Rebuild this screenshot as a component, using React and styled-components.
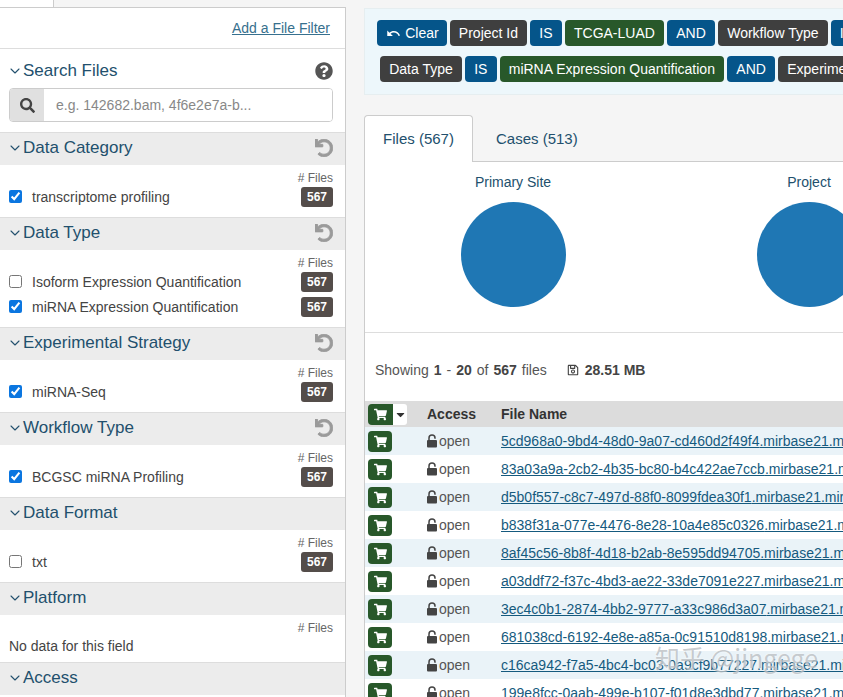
import React from 'react';
import styled, { createGlobalStyle } from 'styled-components';
import { FaSearch, FaQuestionCircle, FaUndo, FaShoppingCart, FaRegSave, FaCaretDown } from 'react-icons/fa';
import { MdUndo } from 'react-icons/md';
import { ChevronDown } from 'lucide-react';

const Global = createGlobalStyle`
  html, body { margin: 0; padding: 0; height: 100%; overflow: hidden; background: #f5f5f5; }
  * { box-sizing: border-box; }
  body { font-family: "Liberation Sans", Arial, sans-serif; font-size: 14px; color: #444; }
`;

const Page = styled.div`
  position: relative; width: 843px; height: 697px; overflow: hidden; display: flex; background: #f5f5f5;
`;
const Side = styled.aside`
  width: 346px; flex: none; display: flex; flex-direction: column;
`;
const TopTab = styled.div`
  width: 54px; height: 8px; flex: none; background: #fff; border-right: 1px solid #ccc;
`;
const SidePanel = styled.div`
  flex: 1; background: #fff; border-top: 1px solid #ccc; border-right: 1px solid #ccc; margin-top: -1px; overflow: hidden;
`;
const FilterBar = styled.div`
  height: 41px; padding: 12px 15px 0 0; text-align: right; border-bottom: 1px solid #ddd;
`;
const TealLink = styled.a`
  color: #37708e; text-decoration: underline; font-size: 14px;
`;
const SearchBlock = styled.section`
  height: 83px; padding: 6px 12px 0 9px;
`;
const Head = styled.div`
  display: flex; align-items: center; height: 32px; color: #22506d; font-size: 17px;
  > span { flex: 1; }
  > svg:first-child { margin-left: -2px; flex: none; }
`;
const FacetHead = styled(Head)`
  background: #ececec; border-top: 1px solid #ddd; padding: 0 12px 3px 9px; height: 33px;
`;
const Search = styled.div`
  display: flex; height: 34px; margin-top: 1px; border: 1px solid #ccc; border-radius: 4px; overflow: hidden;
`;
const SearchAddon = styled.div`
  width: 34px; background: #e0e0e0; display: flex; align-items: center; justify-content: center; color: #444; font-size: 15px;
`;
const SearchInput = styled.div`
  flex: 1; padding: 8px 12px; color: #888; font-size: 14px; background: #fff; white-space: nowrap;
`;
const FacetBody = styled.div`
  padding: 6px 12px 8px 9px; display: flex; flex-direction: column;
`;
const FilesLabel = styled.div`
  text-align: right; font-size: 12px; color: #666; height: 13px; line-height: 14px;
`;
const Row = styled.label`
  display: flex; align-items: center; height: 25px; font-size: 14px; color: #444;
  input { margin: 0 10px 0 0; width: 13px; height: 13px; accent-color: #0b76e0; }
  > span { flex: 1; }
`;
const Count = styled.span`
  flex: none !important; background: #544d4a; color: #fff; font-weight: bold; font-size: 12px; width: 32px; height: 20px;
  line-height: 20px; text-align: center; border-radius: 3px;
`;
const NoData = styled.div`
  font-size: 14px; line-height: 16px; color: #444; margin-top: 4px;
`;

const Main = styled.main`
  flex: 1; min-width: 0; padding: 8px 0 0 18px; display: flex; flex-direction: column; overflow: hidden;
`;
const Query = styled.div`
  height: 87px; width: 600px; background: #edf7fb; border: 1px solid #e6eef0; padding: 11px 0 0 12px; overflow: hidden; flex: none;
`;
const PillRow = styled.div`
  display: flex; gap: 3px; height: 26px; margin-bottom: 10px; white-space: nowrap; margin-left: ${p => p.$indent ? 3 : 0}px;
`;
const Pill = styled.span`
  display: inline-flex; align-items: center; gap: 4px; flex: none; height: 26px; padding: 0 9.2px; border-radius: 4px; color: #fff; font-size: 14px;
  background: ${p => ({ blue: '#05558a', dark: '#3f3f3f', green: '#28582a' }[p.$c])};
`;
const ClearPill = styled(Pill)`
  padding-right: 8px;
`;
const Tabs = styled.div`
  display: flex; margin-top: 20px; height: 47px; flex: none; position: relative; z-index: 1;
`;
const ActiveTab = styled.div`
  width: 109px; height: 47px; background: #fff; border: 1px solid #ccc; border-bottom: 0; border-radius: 4px 4px 0 0;
  padding-top: 14px; text-align: center; color: #22506d; font-size: 15px;
`;
const Tab = styled.div`
  padding: 15px 0 0 23px; color: #22506d; font-size: 15px;
`;
const Panel = styled.div`
  flex: 1; width: 600px; background: #fff; border: 1px solid #ccc; margin-top: -1px;
`;
const Charts = styled.div`
  height: 171px; border-bottom: 1px solid #ddd; display: flex; padding-top: 12px;
`;
const Chart = styled.div`
  width: 296px; flex: none; display: flex; flex-direction: column; align-items: center; color: #22506d; font-size: 14px;
`;
const Pie = styled.div`
  width: 105px; height: 105px; border-radius: 50%; background: #1f77b4; margin-top: 12px;
`;
const Summary = styled.div`
  height: 68px; padding: 29px 0 0 10px; color: #555; font-size: 14px; display: flex; align-items: flex-start; gap: 5px;
  b { color: #444; }
`;
const Size = styled.span`
  display: inline-flex; align-items: center; gap: 6px; margin-left: 15px; font-weight: bold; color: #444;
  svg { font-size: 12px; }
`;
const TableHead = styled.div`
  display: flex; align-items: center; height: 26px; background: #dcdcdc; font-weight: bold; color: #333; font-size: 14px;
`;
const CartCol = styled.div`
  width: 62px; flex: none; padding-left: 3px; display: flex; align-items: center;
`;
const AccessCol = styled.div`
  width: 74px; flex: none; display: flex; align-items: center; gap: 2px;
`;
const CartBtn = styled.span`
  display: inline-flex; align-items: center; justify-content: center; width: 24px; height: 21px; background: #28582a; color: #fff; border-radius: 4px; font-size: 13px;
`;
const HeadCart = styled(CartBtn)`
  border-radius: 4px 0 0 4px; width: 25px;
`;
const CartDrop = styled.span`
  display: inline-flex; align-items: center; justify-content: center; width: 14px; height: 21px; background: #fff; color: #333; font-size: 13px; border-radius: 0 3px 3px 0;
`;
const TableRow = styled.div`
  display: flex; align-items: center; height: 28px; background: ${p => p.$odd ? '#eaf3f8' : '#fff'}; white-space: nowrap; color: #555;
`;
const FileLink = styled.a`
  color: #155a7e; text-decoration: underline; font-size: 14px;
`;
const Watermark = styled.div`
  position: absolute; left: 655px; top: 639px; color: rgba(165,170,175,.6); font-size: 25px; white-space: nowrap;
  text-shadow: 0 0 2px rgba(255,255,255,.85);
  font-family: "Noto Sans CJK SC", "Liberation Sans", sans-serif;
`;

const Chevron = () => <ChevronDown size={16} strokeWidth={1.6} />;
const Padlock = () => (
  <svg width="10" height="14" viewBox="0 0 10 14" aria-hidden="true">
    <rect x="0" y="6" width="10" height="7.5" rx="1" fill="#444" />
    <path d="M2 7V4a3 3 0 0 1 6 0v.8" fill="none" stroke="#444" strokeWidth="1.5" />
  </svg>
);

const Facet = ({ title, reset = true, children }) => (
  <>
    <FacetHead>
      <Chevron />
      <span>{title}</span>
      {reset && <FaUndo size={18} color="#9a9a9a" stroke="#9a9a9a" strokeWidth={25} />}
    </FacetHead>
    <FacetBody>
      <FilesLabel># Files</FilesLabel>
      {children}
    </FacetBody>
  </>
);
const Item = ({ label, on }) => (
  <Row><input type="checkbox" defaultChecked={on} /><span>{label}</span><Count>567</Count></Row>
);

const files = [
  '5cd968a0-9bd4-48d0-9a07-cd460d2f49f4', '83a03a9a-2cb2-4b35-bc80-b4c422ae7ccb', 'd5b0f557-c8c7-497d-88f0-8099fdea30f1',
  'b838f31a-077e-4476-8e28-10a4e85c0326', '8af45c56-8b8f-4d18-b2ab-8e595dd94705', 'a03ddf72-f37c-4bd3-ae22-33de7091e227',
  '3ec4c0b1-2874-4bb2-9777-a33c986d3a07', '681038cd-6192-4e8e-a85a-0c91510d8198', 'c16ca942-f7a5-4bc4-bc03-0a9cf9b77227',
  '199e8fcc-0aab-499e-b107-f01d8e3dbd77',
];

export default function App() {
  return (
    <Page>
      <Global />
      <Side>
        <TopTab />
        <SidePanel>
          <FilterBar><TealLink>Add a File Filter</TealLink></FilterBar>
          <SearchBlock>
            <Head><Chevron /><span>Search Files</span><FaQuestionCircle size={18} color="#555" /></Head>
            <Search><SearchAddon><FaSearch /></SearchAddon><SearchInput>e.g. 142682.bam, 4f6e2e7a-b...</SearchInput></Search>
          </SearchBlock>
          <Facet title="Data Category"><Item label="transcriptome profiling" on /></Facet>
          <Facet title="Data Type"><Item label="Isoform Expression Quantification" /><Item label="miRNA Expression Quantification" on /></Facet>
          <Facet title="Experimental Strategy"><Item label="miRNA-Seq" on /></Facet>
          <Facet title="Workflow Type"><Item label="BCGSC miRNA Profiling" on /></Facet>
          <Facet title="Data Format" reset={false}><Item label="txt" /></Facet>
          <Facet title="Platform" reset={false}><NoData>No data for this field</NoData></Facet>
          <Facet title="Access" reset={false} />
        </SidePanel>
      </Side>
      <Main>
        <Query>
          <PillRow>
            <ClearPill $c="blue"><MdUndo size={15} />Clear</ClearPill><Pill $c="dark">Project Id</Pill><Pill $c="blue">IS</Pill><Pill $c="green">TCGA-LUAD</Pill><Pill $c="blue">AND</Pill><Pill $c="dark">Workflow Type</Pill><Pill $c="blue">IS</Pill>
          </PillRow>
          <PillRow $indent>
            <Pill $c="dark">Data Type</Pill><Pill $c="blue">IS</Pill><Pill $c="green">miRNA Expression Quantification</Pill><Pill $c="blue">AND</Pill><Pill $c="dark">Experimental Strategy</Pill>
          </PillRow>
        </Query>
        <Tabs><ActiveTab>Files (567)</ActiveTab><Tab>Cases (513)</Tab></Tabs>
        <Panel>
          <Charts>
            <Chart>Primary Site<Pie /></Chart>
            <Chart>Project<Pie /></Chart>
          </Charts>
          <Summary><span>Showing</span><b>1</b><span>-</span><b>20</b><span>of</span><b>567</b><span>files</span><Size><FaRegSave />28.51 MB</Size></Summary>
          <TableHead>
            <CartCol><HeadCart><FaShoppingCart /></HeadCart><CartDrop><FaCaretDown /></CartDrop></CartCol>
            <AccessCol>Access</AccessCol>
            <span>File Name</span>
          </TableHead>
          {files.map((f, i) => (
            <TableRow key={f} $odd={i % 2 === 0}>
              <CartCol><CartBtn><FaShoppingCart /></CartBtn></CartCol>
              <AccessCol><Padlock />open</AccessCol>
              <FileLink>{f}.mirbase21.mirnas.quantification.txt</FileLink>
            </TableRow>
          ))}
        </Panel>
      </Main>
      <Watermark>知乎 @jingege</Watermark>
    </Page>
  );
}
